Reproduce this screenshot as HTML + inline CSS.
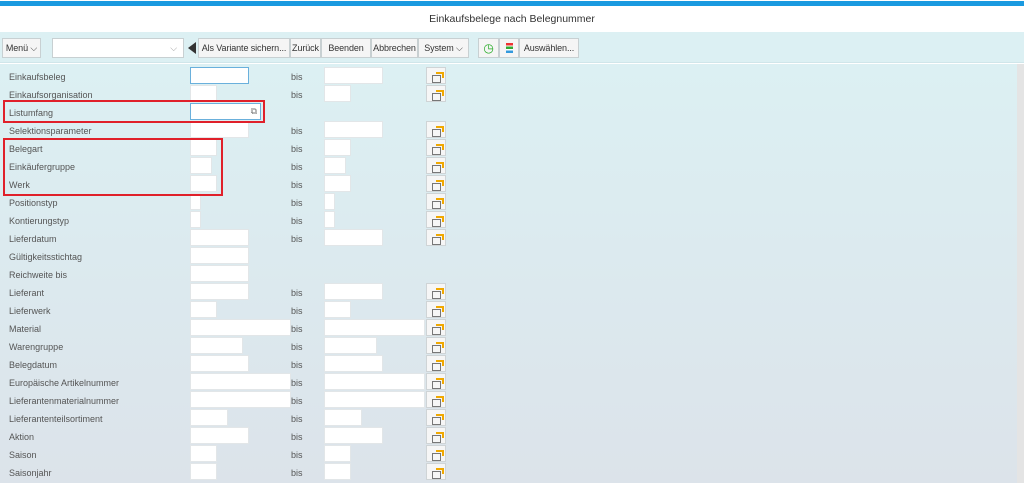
<!DOCTYPE html><html><head><meta charset="utf-8"><style>
*{margin:0;padding:0;box-sizing:border-box}
body{width:1024px;height:483px;overflow:hidden;font-family:"Liberation Sans",sans-serif;background:#fff;position:relative}
.top{position:absolute;left:0;top:1px;width:1024px;height:5px;background:#1a9ae0}
.title{position:absolute;top:13px;width:1024px;text-align:center;font-size:10.5px;color:#333}
.tb{position:absolute;top:32px;left:0;width:1024px;height:31px;background:#dcf0f3;border-bottom:1px solid #d0e6ea}
.main{position:absolute;top:64px;left:0;width:1017px;height:419px;background:linear-gradient(#dcf0f3,#dce3ea)}
.sb{position:absolute;top:64px;left:1017px;width:7px;height:419px;background:#e4e4e4}
.b{position:absolute;top:38px;height:20px;background:#f5f5f5;border:1px solid #c8d0d2;font-size:9px;color:#333;line-height:18px;padding:0;text-align:center;white-space:nowrap;overflow:hidden;letter-spacing:-0.1px}
.r{position:absolute;left:0;width:1017px;height:18px}
.l{position:absolute;left:9px;top:5px;font-size:9px;color:#555}
.i{position:absolute;top:0;height:17px;background:#fff;border:1px solid #e2e6e8}
.bis{position:absolute;left:291px;top:5px;font-size:9px;color:#555}
.k{position:absolute;left:426px;top:0;width:20px;height:17px;background:#f6f6f6;border:1px solid #cfd4d6}
.k:after{content:"";position:absolute;left:5px;top:7px;width:7px;height:6px;border:1px solid #777}
.k:before{content:"";position:absolute;left:9px;top:4px;width:6px;height:4px;border-top:2px solid #f0a800;border-right:2px solid #f0a800}
.red{position:absolute;border:2px solid #e0202a}
</style></head><body>
<div class="top"></div>
<div class="title">Einkaufsbelege nach Belegnummer</div>
<div class="tb"></div>
<div class="main"></div>
<div class="sb"></div>
<div class="b" style="left:2px;width:39px">Menü ⌵</div>
<div class="b" style="left:52px;width:132px;background:#fff;text-align:right;color:#999;padding-right:6px">⌵</div>
<div style="position:absolute;left:188px;top:42px;width:0;height:0;border-top:6px solid transparent;border-bottom:6px solid transparent;border-right:8px solid #333"></div>
<div class="b" style="left:198px;width:92px">Als Variante sichern...</div>
<div class="b" style="left:290px;width:31px">Zurück</div>
<div class="b" style="left:321px;width:50px">Beenden</div>
<div class="b" style="left:371px;width:47px">Abbrechen</div>
<div class="b" style="left:418px;width:51px">System ⌵</div>
<div class="b" style="left:478px;width:21px;color:#2a2;font-size:12px">◷</div>
<div class="b" style="left:499px;width:20px"><div style="margin:4px 6px;width:7px;height:10px;background:linear-gradient(#e33 0 25%,#fff 25% 37%,#3a3 37% 62%,#fff 62% 75%,#39d 75%)"></div></div>
<div class="b" style="left:519px;width:60px">Auswählen...</div>

<div class="r" style="top:67px"><span class="l">Einkaufsbeleg</span><div class="i" style="left:190px;width:59px;border-color:#6ab0dc"></div><span class="bis">bis</span><div class="i" style="left:324px;width:59px"></div><div class="k"></div></div>
<div class="r" style="top:85px"><span class="l">Einkaufsorganisation</span><div class="i" style="left:190px;width:27px"></div><span class="bis">bis</span><div class="i" style="left:324px;width:27px"></div><div class="k"></div></div>
<div class="r" style="top:103px"><span class="l">Listumfang</span><div class="i" style="left:190px;width:71px;border-color:#6ab0dc;font-size:9px;color:#777;text-align:right;padding-right:3px;line-height:15px">⧉</div></div>
<div class="r" style="top:121px"><span class="l">Selektionsparameter</span><div class="i" style="left:190px;width:59px"></div><span class="bis">bis</span><div class="i" style="left:324px;width:59px"></div><div class="k"></div></div>
<div class="r" style="top:139px"><span class="l">Belegart</span><div class="i" style="left:190px;width:27px"></div><span class="bis">bis</span><div class="i" style="left:324px;width:27px"></div><div class="k"></div></div>
<div class="r" style="top:157px"><span class="l">Einkäufergruppe</span><div class="i" style="left:190px;width:22px"></div><span class="bis">bis</span><div class="i" style="left:324px;width:22px"></div><div class="k"></div></div>
<div class="r" style="top:175px"><span class="l">Werk</span><div class="i" style="left:190px;width:27px"></div><span class="bis">bis</span><div class="i" style="left:324px;width:27px"></div><div class="k"></div></div>
<div class="r" style="top:193px"><span class="l">Positionstyp</span><div class="i" style="left:190px;width:11px"></div><span class="bis">bis</span><div class="i" style="left:324px;width:11px"></div><div class="k"></div></div>
<div class="r" style="top:211px"><span class="l">Kontierungstyp</span><div class="i" style="left:190px;width:11px"></div><span class="bis">bis</span><div class="i" style="left:324px;width:11px"></div><div class="k"></div></div>
<div class="r" style="top:229px"><span class="l">Lieferdatum</span><div class="i" style="left:190px;width:59px"></div><span class="bis">bis</span><div class="i" style="left:324px;width:59px"></div><div class="k"></div></div>
<div class="r" style="top:247px"><span class="l">Gültigkeitsstichtag</span><div class="i" style="left:190px;width:59px"></div></div>
<div class="r" style="top:265px"><span class="l">Reichweite bis</span><div class="i" style="left:190px;width:59px"></div></div>
<div class="r" style="top:283px"><span class="l">Lieferant</span><div class="i" style="left:190px;width:59px"></div><span class="bis">bis</span><div class="i" style="left:324px;width:59px"></div><div class="k"></div></div>
<div class="r" style="top:301px"><span class="l">Lieferwerk</span><div class="i" style="left:190px;width:27px"></div><span class="bis">bis</span><div class="i" style="left:324px;width:27px"></div><div class="k"></div></div>
<div class="r" style="top:319px"><span class="l">Material</span><div class="i" style="left:190px;width:101px"></div><span class="bis">bis</span><div class="i" style="left:324px;width:101px"></div><div class="k"></div></div>
<div class="r" style="top:337px"><span class="l">Warengruppe</span><div class="i" style="left:190px;width:53px"></div><span class="bis">bis</span><div class="i" style="left:324px;width:53px"></div><div class="k"></div></div>
<div class="r" style="top:355px"><span class="l">Belegdatum</span><div class="i" style="left:190px;width:59px"></div><span class="bis">bis</span><div class="i" style="left:324px;width:59px"></div><div class="k"></div></div>
<div class="r" style="top:373px"><span class="l">Europäische Artikelnummer</span><div class="i" style="left:190px;width:101px"></div><span class="bis">bis</span><div class="i" style="left:324px;width:101px"></div><div class="k"></div></div>
<div class="r" style="top:391px"><span class="l">Lieferantenmaterialnummer</span><div class="i" style="left:190px;width:101px"></div><span class="bis">bis</span><div class="i" style="left:324px;width:101px"></div><div class="k"></div></div>
<div class="r" style="top:409px"><span class="l">Lieferantenteilsortiment</span><div class="i" style="left:190px;width:38px"></div><span class="bis">bis</span><div class="i" style="left:324px;width:38px"></div><div class="k"></div></div>
<div class="r" style="top:427px"><span class="l">Aktion</span><div class="i" style="left:190px;width:59px"></div><span class="bis">bis</span><div class="i" style="left:324px;width:59px"></div><div class="k"></div></div>
<div class="r" style="top:445px"><span class="l">Saison</span><div class="i" style="left:190px;width:27px"></div><span class="bis">bis</span><div class="i" style="left:324px;width:27px"></div><div class="k"></div></div>
<div class="r" style="top:463px"><span class="l">Saisonjahr</span><div class="i" style="left:190px;width:27px"></div><span class="bis">bis</span><div class="i" style="left:324px;width:27px"></div><div class="k"></div></div>

<div class="red" style="left:3px;top:100px;width:262px;height:23px"></div>
<div class="red" style="left:3px;top:138px;width:220px;height:58px"></div>
</body></html>
